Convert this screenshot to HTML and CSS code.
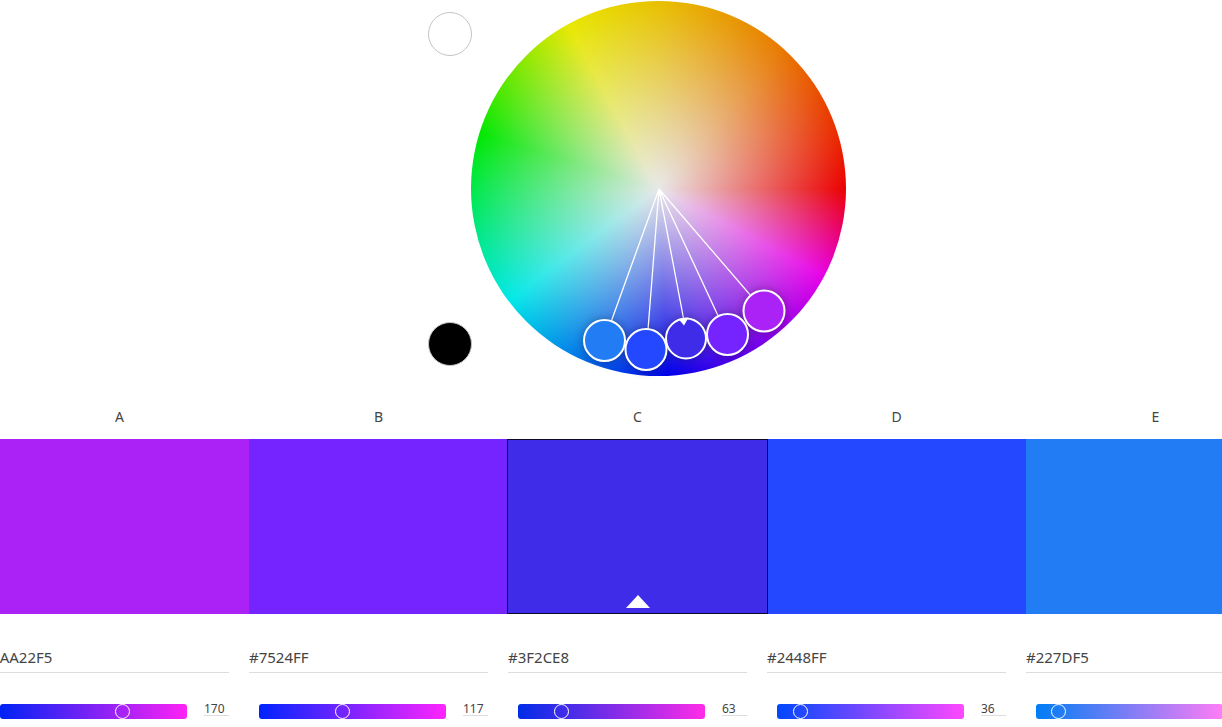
FILE: index.html
```html
<!DOCTYPE html>
<html lang="en">
<head>
<meta charset="utf-8">
<title>Color wheel</title>
<link rel="stylesheet" href="styles.css">
</head>
<body>
<main class="theme">
  <section class="picker" aria-label="Color wheel">
    <div class="backdrops">
      <button class="backdrop backdrop-light" type="button" aria-label="Light background"></button>
      <button class="backdrop backdrop-dark" type="button" aria-label="Dark background"></button>
    </div>
    <div class="wheel">
      <svg class="harmony" viewBox="0 0 375 375" aria-hidden="true">
        <path class="spokes" d="M188 188 133.500 339M188 188 175.500 348M188 188 213 320M188 188 256 334M188 188 293 310"/>
        <g class="handles">
          <circle cx="133.500" cy="339.500" r="20.500" fill="#227df5"/>
          <circle cx="175" cy="348.500" r="20.500" fill="#2448ff"/>
          <circle cx="256.500" cy="333.500" r="20.500" fill="#7524ff"/>
          <circle cx="293" cy="310" r="20.500" fill="#aa22f5"/>
          <circle cx="215" cy="337.500" r="20" fill="#3f2ce8"/>
        </g>
        <path d="M207.500 318 217.500 316.500 213 324.500Z" fill="#fff"/>
      </svg>
    </div>
  </section>
  <section class="colors" aria-label="Theme colors">
    <article class="color">
      <h2 class="name">A</h2>
      <button class="swatch swatch-a" type="button" aria-label="Select color A"></button>
      <input class="hex" type="text" value="#AA22F5" aria-label="Hex value A">
      <div class="channel">
        <input class="slider slider-a" type="range" min="14" max="248" value="170" aria-label="Red A">
        <input class="amount" type="text" value="170" aria-label="Red value A">
      </div>
    </article>
    <article class="color">
      <h2 class="name">B</h2>
      <button class="swatch swatch-b" type="button" aria-label="Select color B"></button>
      <input class="hex" type="text" value="#7524FF" aria-label="Hex value B">
      <div class="channel">
        <input class="slider slider-b" type="range" min="14" max="248" value="117" aria-label="Red B">
        <input class="amount" type="text" value="117" aria-label="Red value B">
      </div>
    </article>
    <article class="color">
      <h2 class="name">C</h2>
      <button class="swatch swatch-c" type="button" aria-label="Select color C" aria-pressed="true">
        <svg class="base-mark" viewBox="0 0 24 13" aria-hidden="true"><path d="M12 0 24 13H0Z" fill="#fff"/></svg>
      </button>
      <input class="hex" type="text" value="#3F2CE8" aria-label="Hex value C">
      <div class="channel">
        <input class="slider slider-c" type="range" min="14" max="248" value="63" aria-label="Red C">
        <input class="amount" type="text" value="63" aria-label="Red value C">
      </div>
    </article>
    <article class="color">
      <h2 class="name">D</h2>
      <button class="swatch swatch-d" type="button" aria-label="Select color D"></button>
      <input class="hex" type="text" value="#2448FF" aria-label="Hex value D">
      <div class="channel">
        <input class="slider slider-d" type="range" min="14" max="248" value="36" aria-label="Red D">
        <input class="amount" type="text" value="36" aria-label="Red value D">
      </div>
    </article>
    <article class="color">
      <h2 class="name">E</h2>
      <button class="swatch swatch-e" type="button" aria-label="Select color E"></button>
      <input class="hex" type="text" value="#227DF5" aria-label="Hex value E">
      <div class="channel">
        <input class="slider slider-e" type="range" min="14" max="248" value="34" aria-label="Red E">
        <input class="amount" type="text" value="34" aria-label="Red value E">
      </div>
    </article>
  </section>
</main>
</body>
</html>
```

FILE: styles.css
```css
* { box-sizing: border-box; }

body {
  margin: 0;
  overflow: hidden;
  background: #fff;
  color: #444;
  font-family: "Noto Sans", "Open Sans", sans-serif;
}

button, input {
  margin: 0;
  padding: 0;
  border: 0;
  font: inherit;
  color: inherit;
  background: none;
  outline: none;
}

.theme { margin: 0 -63px 0 -10px; }

.picker {
  display: flex;
  justify-content: center;
  padding: 1px 1px 0 0;
}

.backdrops {
  display: flex;
  flex-direction: column;
  justify-content: space-between;
  width: 43px;
  padding: 11px 0 10px;
}

.backdrop {
  width: 44px;
  height: 44px;
  border: 1px solid #c4c4c4;
  border-radius: 50%;
}

.backdrop-light { background: #fff; }
.backdrop-dark { background: #000; }

.wheel {
  width: 375px;
  height: 375px;
  border-radius: 50%;
  background:
    radial-gradient(closest-side, #e8e8e8, rgba(232, 232, 232, 0)),
    conic-gradient(
      #e8c000 0deg,
      #e87800 42deg,
      #eb0000 90deg,
      #e800e8 118deg,
      #0000e8 177deg,
      #00e8e8 233deg,
      #00e800 287deg,
      #e8e800 331deg,
      #e8c000 360deg);
}

.harmony {
  display: block;
  width: 100%;
  overflow: visible;
}

.spokes {
  fill: none;
  stroke: #fff;
  stroke-width: 1.3;
}

.handles {
  stroke: #fff;
  stroke-width: 2;
  filter: drop-shadow(0 0 4px rgba(0, 0, 0, .3));
}

.colors {
  display: grid;
  grid-template-columns: repeat(5, 1fr);
  padding-top: 31px;
}

.color {
  display: flex;
  flex-direction: column;
  min-width: 0;
}

.name {
  margin: 0 0 12px;
  font-size: 14px;
  font-weight: 400;
  line-height: 20px;
  text-align: center;
}

.swatch {
  display: flex;
  justify-content: center;
  align-items: flex-end;
  height: 175px;
}

.swatch-a { background: #aa22f5; }
.swatch-b { background: #7524ff; }
.swatch-c {
  margin: 0 -1px;
  padding-bottom: 5px;
  border: 1px solid #0b0828;
  background: #3f2ce8;
  z-index: 1;
}
.swatch-d { background: #2448ff; }
.swatch-e { background: #227df5; }

.base-mark { width: 24px; height: 13px; }

.hex {
  width: auto;
  height: 30px;
  margin: 29px 20px 0 0;
  padding-bottom: 1px;
  border-bottom: 1px solid #ddd;
  font-size: 15px;
}

.hex:focus, .amount:focus { border-color: #888; }

.channel {
  display: flex;
  align-items: flex-start;
  gap: 17px;
  margin: 27px 20px 0 10px;
}

.slider {
  appearance: none;
  flex: 1;
  min-width: 0;
  height: 15px;
  margin-top: 4px;
  border-radius: 3px;
}

.slider::-webkit-slider-thumb {
  appearance: none;
  width: 15px;
  height: 15px;
  border: 1px solid #fff;
  border-radius: 50%;
  background: transparent;
}

.slider-a { background: linear-gradient(90deg, #0022f5, #ff22f5); }
.slider-b { background: linear-gradient(90deg, #0024ff, #ff24ff); }
.slider-c { background: linear-gradient(90deg, #002ce8, #ff2ce8); }
.slider-d { background: linear-gradient(90deg, #0048ff, #ff48ff); }
.slider-e { background: linear-gradient(90deg, #007df5, #ff7df5); }

.amount {
  width: 25px;
  height: 16px;
  padding-top: 2px;
  border-bottom: 1px solid #ddd;
  font-size: 12px;
}
```
